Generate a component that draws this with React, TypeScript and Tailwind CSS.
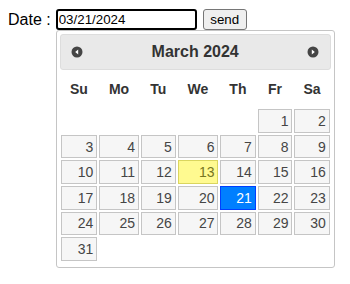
import React from 'react';

const DAYS = ['Su', 'Mo', 'Tu', 'We', 'Th', 'Fr', 'Sa'];

// March 2024 starts on a Friday
const WEEKS: (number | null)[][] = [
  [null, null, null, null, null, 1, 2],
  [3, 4, 5, 6, 7, 8, 9],
  [10, 11, 12, 13, 14, 15, 16],
  [17, 18, 19, 20, 21, 22, 23],
  [24, 25, 26, 27, 28, 29, 30],
  [31, null, null, null, null, null, null],
];

const TODAY = 13;
const SELECTED = 21;

function NavIcon({ dir }: { dir: 'prev' | 'next' }) {
  return (
    <svg width="12" height="12" viewBox="0 0 12 12">
      <circle cx="6" cy="6" r="5.5" fill="#454545" />
      {dir === 'prev' ? (
        <polygon points="7.2,3.4 4.2,6 7.2,8.6" fill="#fff" />
      ) : (
        <polygon points="4.8,3.4 7.8,6 4.8,8.6" fill="#fff" />
      )}
    </svg>
  );
}

function DayCell({ day }: { day: number | null }) {
  if (day === null) return <td className="p-[1px] border-0">{'\u00a0'}</td>;

  let state = 'border-[#c5c5c5] bg-[#f6f6f6] text-[#454545]';
  if (day === SELECTED) state = 'border-[#003eff] bg-[#007fff] text-white';
  else if (day === TODAY) state = 'border-[#dad55e] bg-[#fffa90] text-[#777620]';

  return (
    <td className="p-[1px] border-0">
      <a className={`block border p-[0.2em] text-right leading-[16px] cursor-pointer ${state}`}>{day}</a>
    </td>
  );
}

function Datepicker() {
  return (
    <div className="absolute left-0 top-full z-10 w-[279px] px-[3px] pt-[3.2px] bg-white border border-[#c5c5c5] rounded-[3px] text-[#333] font-['Liberation_Sans',Arial,sans-serif]">
      <div className="relative py-[3px] bg-[#e9e9e9] border border-[#dddddd] rounded-[3px] font-bold text-[16px] text-[#333]">
        <a className="absolute top-[2px] left-[2px] w-[28.8px] h-[28.8px] flex items-center justify-center cursor-pointer">
          <NavIcon dir="prev" />
        </a>
        <a className="absolute top-[2px] right-[2px] w-[28.8px] h-[28.8px] flex items-center justify-center cursor-pointer">
          <NavIcon dir="next" />
        </a>
        <div className="mx-[2.3em] leading-[28px] text-center">
          <span>March</span> <span>2024</span>
        </div>
      </div>
      <table className="w-full border-collapse text-[14px] mb-[0.4em]">
        <thead>
          <tr>
            {DAYS.map((d) => (
              <th key={d} className="px-[0.3em] py-[11px] leading-[16px] text-center font-bold border-0">
                <span>{d}</span>
              </th>
            ))}
          </tr>
        </thead>
        <tbody>
          {WEEKS.map((week, i) => (
            <tr key={i}>
              {week.map((day, j) => (
                <DayCell key={j} day={day} />
              ))}
            </tr>
          ))}
        </tbody>
      </table>
    </div>
  );
}

export default function App() {
  return (
    <div className="relative w-[350px] h-[284px] bg-white pl-2 pt-[9px] font-['Liberation_Sans',Arial,sans-serif]">
      <div className="flex items-center">
        <label className="text-[16px] leading-[18px] text-black mr-[5px]">Date :</label>
        <div className="relative">
          <input
            type="text"
            defaultValue="03/21/2024"
            className="block w-[141px] h-[21px] px-[1px] border-2 border-black rounded-[3px] text-[13.33px] text-black outline-none"
          />
          <Datepicker />
        </div>
        <button className="ml-[6px] w-[44px] h-[21px] bg-[#efefef] border border-[#767676] rounded-[3px] text-[13.33px] text-black">
          send
        </button>
      </div>
    </div>
  );
}
